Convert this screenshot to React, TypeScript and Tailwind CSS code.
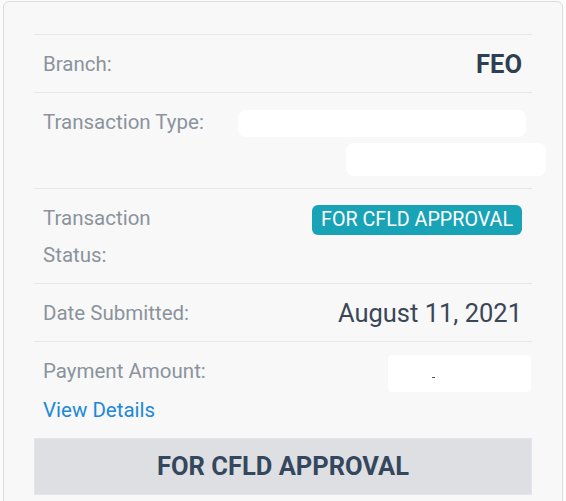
import type { ReactNode } from 'react'

function Row({ label, children }: { label: ReactNode; children?: ReactNode }) {
  return (
    <div className="flex items-start justify-between border-t border-[#e4e7eb] px-[9px] pt-[11px] pb-[9px]">
      <div className="w-[166px] shrink-0 text-[20.5px] leading-[37px] text-[#8b939c]">{label}</div>
      <div className="flex min-w-0 flex-1 flex-col items-end pr-px text-right">{children}</div>
    </div>
  )
}

// white redaction marks from the original capture
function Redact({ className }: { className: string }) {
  return <div className={`rounded-[8px] bg-white ${className}`} />
}

export default function App() {
  return (
    <div className="min-h-screen bg-[#fbfbfb] pt-px font-['Roboto',sans-serif]">
      <div className="mx-[3px] w-[560px] rounded-[6px] border border-[#dcdddf] bg-[#f8f8f9] px-[30px] pt-[32px] pb-[30px]">
        <Row label="Branch:">
          <span className="text-[25.5px] font-bold leading-[37px] text-[#2e3f52]">FEO</span>
        </Row>

        <Row label="Transaction Type:">
          <div className="h-[75px] w-full">
            <div className="flex flex-col items-end">
              <Redact className="mt-[6px] mr-[-4px] h-[27px] w-[288px]" />
              <Redact className="mt-[6px] mr-[-24px] h-[33px] w-[200px]" />
            </div>
          </div>
        </Row>

        <Row label="Transaction Status:">
          <div className="leading-[37px]">
            <span className="inline-block rounded-[6px] bg-[#19a3b7] px-[9px] align-middle text-[19.7px] leading-[30px] text-white">
              FOR CFLD APPROVAL
            </span>
          </div>
        </Row>

        <Row label="Date Submitted:">
          <span className="text-[25.5px] leading-[37px] text-[#3a4757]">August 11, 2021</span>
        </Row>

        <div className="border-t border-[#e4e7eb] px-[9px] pt-[11px] pb-[9px]">
          <div className="flex items-start justify-between">
            <div className="text-[20.5px] leading-[37px] text-[#8b939c]">Payment Amount:</div>
            <div className="relative mt-[2px] mr-[-8px] h-[37px] w-[143px] rounded-[4px] bg-white">
              <span className="absolute top-[22px] left-[44px] h-px w-[3px] bg-[#555]" />
            </div>
          </div>
          <a href="#" className="block text-[20.5px] leading-[37px] text-[#2188d8]">
            View Details
          </a>
        </div>

        <div className="flex h-[57px] items-center justify-center border border-[#e3e5e8] bg-[#dddfe3] text-[25.5px] font-bold text-[#34475c]">
          FOR CFLD APPROVAL
        </div>
      </div>
    </div>
  )
}
